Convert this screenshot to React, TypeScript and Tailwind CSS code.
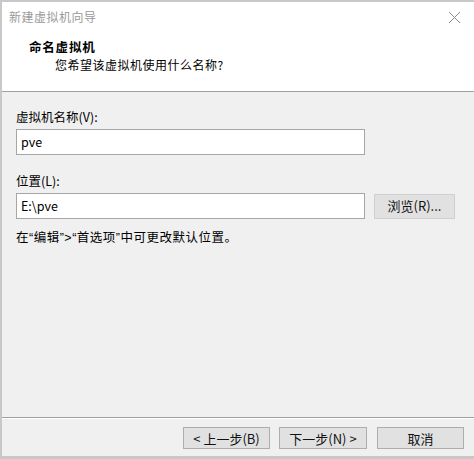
import React from 'react';

const font = { fontFamily: '"Microsoft YaHei", "Noto Sans CJK SC", "Noto Sans", sans-serif' };

function Btn({ label, w }: { label: string; w: string }) {
  return (
    <button
      className={`${w} h-[22px] bg-[#e1e1e1] border border-[#adadad] text-[13px] leading-none text-[#111]`}
    >
      {label}
    </button>
  );
}

// narrow latin punctuation, as the reference renders it
const Q = ({ c }: { c: string }) => <span className="font-['Liberation_Sans']">{c}</span>;

export default function App() {
  return (
    <div
      className="w-[474px] h-[459px] bg-[#c8c8c8] pt-[2px] pl-[2px] pb-[3px] flex flex-col text-black"
      style={font}
    >
      {/* title bar */}
      <div className="h-[30px] bg-white flex items-center justify-between pl-[7px] pr-[13px]">
        <span className="text-[12px] tracking-[0.5px] text-[#9a9a9a]">新建虚拟机向导</span>
        <svg width="13" height="13" viewBox="0 0 13 13" className="text-[#8a8a8a]">
          <path d="M1 1L12 12M12 1L1 12" stroke="currentColor" strokeWidth="1" />
        </svg>
      </div>

      {/* header */}
      <div className="h-[60px] bg-white border-b border-[#a0a0a0] pt-[7px]">
        <div className="pl-[27px] text-[12.5px] leading-[16px] font-bold tracking-[0.8px]">命名虚拟机</div>
        <div className="pl-[53px] mt-[2px] text-[12px] leading-[16px] tracking-[0.5px]">
          您希望该虚拟机使用什么名称?
        </div>
      </div>

      {/* body */}
      <div className="flex-1 bg-[#f0f0f0] flex flex-col">
        <div className="flex-1 pl-[14px] pt-[17px]">
          <div className="text-[12.5px] leading-[16px]">虚拟机名称(V):</div>
          <div className="mt-[4px] w-[349px] h-[26px] bg-white border border-[#a6a6a6] flex items-center pl-[4px] text-[12.5px]">
            pve
          </div>

          <div className="mt-[18px] text-[12.5px] leading-[16px]">位置(L):</div>
          <div className="mt-[4px] flex items-center">
            <div className="w-[349px] h-[26px] bg-white border border-[#a6a6a6] flex items-center pl-[4px] text-[12.5px]">
              E:\pve
            </div>
            <button className="ml-[9px] w-[81px] h-[25px] bg-[#e1e1e1] border border-[#cfcfcf] text-[13px] text-[#111]">
              浏览(R)...
            </button>
          </div>

          <div className="mt-[10px] text-[12.5px] leading-[16px] tracking-[0.5px]">
            在<Q c="“" />编辑<Q c="”>“" />首选项<Q c="”" />中可更改默认位置。
          </div>
        </div>

        {/* footer */}
        <div className="h-[39px] border-t border-[#a0a0a0]">
          <div className="border-t border-white h-full flex justify-end items-start pt-[8px] pr-[10px]">
            <Btn label="< 上一步(B)" w="w-[87px]" />
            <div className="w-[9px]" />
            <Btn label="下一步(N) >" w="w-[88px]" />
            <div className="w-[10px]" />
            <Btn label="取消" w="w-[87px]" />
          </div>
        </div>
      </div>
    </div>
  );
}
